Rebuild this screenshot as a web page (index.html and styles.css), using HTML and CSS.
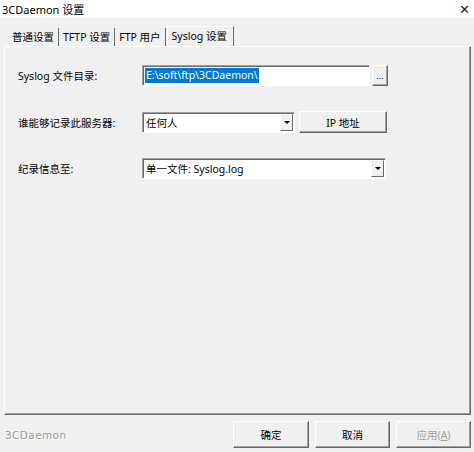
FILE: index.html
```
<!DOCTYPE html>
<html lang="zh-CN">
  <head>
    <meta charset="UTF-8" />
    <meta name="viewport" content="width=device-width, initial-scale=1.0" />
    <title>3CDaemon 设置</title>
    <link rel="stylesheet" href="styles.css">
  </head>
  <body>
    <div class="vindue">
      <header class="titelbar">
        <span class="titel">3CDaemon 设置</span>
        <span class="luk">&#x2715;</span>
      </header>

      <nav class="faner">
        <button class="fane">普通设置</button>
        <button class="fane">TFTP 设置</button>
        <button class="fane">FTP 用户</button>
        <button class="fane valgt">Syslog 设置</button>
      </nav>

      <section class="panel">
        <div class="raekke">
          <label>Syslog 文件目录:</label>
          <div class="felt">
            <div class="input bred"><span class="markeret">E:\soft\ftp\3CDaemon\</span></div>
            <button class="knap prikker">...</button>
          </div>
        </div>

        <div class="raekke">
          <label>谁能够记录此服务器:</label>
          <div class="felt">
            <div class="combo mellem">
              <span class="vaerdi">任何人</span>
              <span class="pil"></span>
            </div>
            <button class="knap ip">IP 地址</button>
          </div>
        </div>

        <div class="raekke">
          <label>纪录信息至:</label>
          <div class="felt">
            <div class="combo fuld">
              <span class="vaerdi">单一文件: Syslog.log</span>
              <span class="pil"></span>
            </div>
          </div>
        </div>
      </section>

      <footer class="bund">
        <span class="maerke">3CDaemon</span>
        <div class="knapper">
          <button class="knap bundknap">确定</button>
          <button class="knap bundknap">取消</button>
          <button class="knap bundknap" disabled>应用(<u>A</u>)</button>
        </div>
      </footer>
    </div>
  </body>
</html>
```

FILE: styles.css
```
body {
  margin: 0;
  padding: 0;
  background: #f0f0f0;
  font-family: "Noto Sans", "Noto Sans CJK SC", sans-serif;
  font-size: 10.5px;
  color: #000;
}

.vindue {
  width: 474px;
  height: 452px;
  display: flex;
  flex-direction: column;
  overflow: hidden;
}

.titelbar {
  height: 17px;
  background: #fff;
  display: flex;
  justify-content: space-between;
  align-items: center;
  padding: 0 4px 1px 2px;
}
.titel {
  font-size: 11px;
}
.luk {
  font-size: 13px;
  color: #222;
}

/* faneblade */
.faner {
  display: flex;
  align-items: flex-end;
  height: 20px;
  margin-top: 8px;
  padding-left: 9px;
}
.fane {
  font: inherit;
  height: 18px;
  padding: 0 4px 1px 3px;
  margin: 0;
  background: #f0f0f0;
  border: none;
  border-right: 1px solid #696969;
  line-height: 16px;
}
.fane + .fane {
  margin-left: 1px;
}
.fane.valgt {
  height: 20px;
  padding: 0 6px 2px 4px;
  border-left: 1px solid #fff;
  border-top: 1px solid #fff;
}

.panel {
  height: 369px;
  margin-left: 4px;
  width: 467px;
  box-sizing: border-box;
  border-top: 1px solid #fff;
  border-left: 1px solid #fff;
  border-right: 1px solid #696969;
  border-bottom: 1px solid #696969;
  box-shadow: inset -1px -1px 0 #a0a0a0;
  padding: 18px 0 0 12px;
  display: flex;
  flex-direction: column;
  gap: 25px;
}

.raekke {
  display: flex;
  align-items: center;
}
.raekke label {
  width: 124px;
  padding-left: 1px;
}
.felt {
  display: flex;
  align-items: center;
  gap: 2px;
}

.input,
.combo {
  height: 21px;
  box-sizing: border-box;
  background: #fff;
  border: 1px solid;
  border-color: #a0a0a0 #fff #fff #a0a0a0;
  box-shadow: inset 1px 1px 0 #696969;
  display: flex;
  align-items: center;
  padding-left: 2px;
}
.bred {
  width: 228px;
}
.markeret {
  background: #0078d7;
  color: #fff;
  line-height: 15px;
  padding: 0 1px;
}

.mellem {
  width: 153px;
}
.fuld {
  width: 244px;
}
.vaerdi {
  flex: 1;
  padding-left: 1px;
}
.pil {
  width: 13px;
  height: 17px;
  margin-right: 1px;
  box-sizing: border-box;
  background: #f0f0f0;
  border: 1px solid;
  border-color: #fff #696969 #696969 #fff;
  display: flex;
  align-items: center;
  justify-content: center;
}
.pil::after {
  content: "";
  border-left: 3px solid transparent;
  border-right: 3px solid transparent;
  border-top: 3px solid #000;
}

.knap {
  font: inherit;
  background: #f0f0f0;
  margin: 0;
  padding: 0;
  border: 1px solid;
  border-color: #fff #696969 #696969 #fff;
  box-shadow: inset -1px -1px 0 #a0a0a0;
  color: #000;
}
.prikker {
  width: 16px;
  height: 21px;
  font-size: 9px;
  line-height: 12px;
}
.ip {
  width: 88px;
  height: 22px;
  margin-left: 2px;
}

.bund {
  flex: 1;
  display: flex;
  align-items: center;
  justify-content: space-between;
  padding: 2px 3px 0 5px;
}
.maerke {
  font-family: "DejaVu Sans", sans-serif;
  color: #9a9a9a;
  text-shadow: 1px 1px 0 #fff;
  font-size: 10.5px;
  letter-spacing: 0.4px;
}
.knapper {
  display: flex;
  gap: 6px;
}
.bundknap {
  width: 75px;
  height: 27px;
}
.bundknap:first-child {
  width: 76px;
}
.bundknap:disabled {
  color: #a0a0a0;
}
.bundknap u {
  text-decoration: underline;
}
```
